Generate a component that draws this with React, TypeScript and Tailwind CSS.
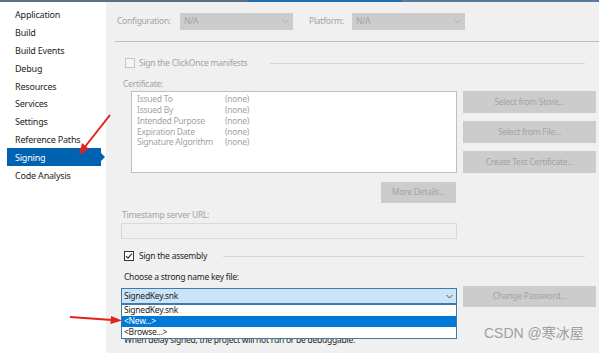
import React from "react";

const items = [
  "Application",
  "Build",
  "Build Events",
  "Debug",
  "Resources",
  "Services",
  "Settings",
  "Reference Paths",
  "Signing",
  "Code Analysis",
];

function Chevron({ color = "#9a9a9a" }: { color?: string }) {
  return (
    <svg width="7" height="5" viewBox="0 0 7 5">
      <path d="M0.5 1 L3.5 4 L6.5 1" fill="none" stroke={color} strokeWidth="1" />
    </svg>
  );
}

function DisabledButton({ label, w, h }: { label: string; w: string; h: string }) {
  return (
    <div className={`${w} ${h} bg-[#cccccc] flex items-center justify-center text-[#a3a3a3] whitespace-nowrap`}>{label}</div>
  );
}

export default function App() {
  return (
    <div
      className="relative w-[599px] h-[353px] overflow-hidden bg-[#f0f0f0] text-[8.5px] tracking-[-0.25px] leading-none text-[#1e1e1e] whitespace-nowrap"
      style={{ fontFamily: '"Noto Sans", "Open Sans", sans-serif' }}
    >
      {/* top strip */}
      <div className="flex h-[2px]">
        <div className="w-[248px] bg-[#5d6f83]" />
        <div className="w-[154px] bg-[#1f6fb2]" />
        <div className="flex-1 bg-[#5b7a99]" />
      </div>
      <div className="flex h-[351px]">
        {/* sidebar */}
        <div className="w-[106px] bg-white pt-[4px] flex flex-col text-[9px] tracking-[-0.2px]">
          {items.map((it) =>
            it === "Signing" ? (
              <div key={it} className="h-[17.8px] flex items-center">
                <div className="ml-[7px] w-[94px] h-[18px] bg-[#0063b1] text-white flex items-center pl-[8px]">
                  {it}
                </div>
                <div className="w-0 h-0 border-y-[4px] border-y-transparent border-l-[4px] border-l-[#0063b1]" />
              </div>
            ) : (
              <div key={it} className="h-[17.8px] flex items-center pl-[15px]">
                {it}
              </div>
            )
          )}
        </div>
        {/* content */}
        <div className="flex-1 flex flex-col">
          {/* config row */}
          <div className="mt-[11px] h-[17px] flex items-center pl-[11px] text-[#a3a3a3]">
            <div className="w-[63px]">Configuration:</div>
            <div className="w-[113px] h-[17px] bg-[#cccccc] flex items-center justify-between pl-[4px] pr-[4px]">
              <span>N/A</span>
              <Chevron color="#b0b0b0" />
            </div>
            <div className="ml-[16px] w-[43px]">Platform:</div>
            <div className="w-[113px] h-[17px] bg-[#cccccc] flex items-center justify-between pl-[4px] pr-[4px]">
              <span>N/A</span>
              <Chevron color="#b0b0b0" />
            </div>
          </div>
          <div className="mt-[11px] ml-[9px] h-px bg-[#bdbdbd]" />
          {/* clickonce */}
          <div className="mt-[16px] h-[10px] flex items-center pl-[19px] pr-[14px] text-[#a3a3a3]">
            <div className="w-[10px] h-[10px] border border-[#c6c6c6] bg-[#f5f5f5] shrink-0" />
            <span className="ml-[4px] w-[131px]">Sign the ClickOnce manifests</span>
            <div className="flex-1 h-px bg-[#d7d7d7]" />
          </div>
          <div className="mt-[11px] pl-[17px] h-[10px] flex items-center text-[#a3a3a3]">Certificate:</div>
          <div className="mt-[2px] flex pl-[25px]">
            <div className="w-[326px] h-[82px] bg-white border border-[#bfbfbf] pt-[2px] pl-[5px] text-[#a3a3a3]">
              {[
                ["Issued To", "(none)"],
                ["Issued By", "(none)"],
                ["Intended Purpose", "(none)"],
                ["Expiration Date", "(none)"],
                ["Signature Algorithm", "(none)"],
              ].map(([a, b]) => (
                <div key={a} className="h-[10.8px] flex items-center">
                  <span className="w-[88px]">{a}</span>
                  <span>{b}</span>
                </div>
              ))}
            </div>
            <div className="ml-[6px] flex flex-col gap-[8px]">
              <DisabledButton label="Select from Store..." w="w-[133px]" h="h-[22px]" />
              <DisabledButton label="Select from File..." w="w-[133px]" h="h-[22px]" />
              <DisabledButton label="Create Test Certificate..." w="w-[133px]" h="h-[22px]" />
            </div>
          </div>
          <div className="mt-[9px] flex pl-[275px]">
            <DisabledButton label="More Details..." w="w-[75px]" h="h-[21px]" />
          </div>
          <div className="mt-[7px] pl-[16px] h-[10px] flex items-center text-[#a3a3a3]">Timestamp server URL:</div>
          <div className="mt-[3px] ml-[15px] w-[336px] h-[16px] border border-[#d9d9d9] bg-[#f0f0f0]" />
          {/* sign the assembly */}
          <div className="mt-[12px] h-[10px] flex items-center pl-[18px] pr-[14px]">
            <div className="w-[10px] h-[10px] border border-[#333333] bg-white flex items-center justify-center shrink-0">
              <svg width="8" height="8" viewBox="0 0 8 8">
                <path d="M1 4 L3 6.2 L7 1.5" fill="none" stroke="#222" strokeWidth="1.1" />
              </svg>
            </div>
            <span className="ml-[5px] w-[84px]">Sign the assembly</span>
            <div className="flex-1 h-px bg-[#d7d7d7]" />
          </div>
          <div className="mt-[11px] pl-[18px] h-[10px] flex items-center">Choose a strong name key file:</div>
          <div className="mt-[4px] flex items-start pl-[15px]">
            <div className="relative">
              <div className="mt-[2px] w-[336px] h-[16px] bg-[#cce4f7] border border-[#3d7bad] flex items-center justify-between pl-[2px] pr-[3px]">
                <span>SignedKey.snk</span>
                <Chevron color="#555" />
              </div>
              <div className="absolute left-0 top-[18px] w-[336px] h-[35px] bg-white border border-[#3d7bad] flex flex-col z-10">
                <div className="h-[11px] flex items-center pl-[2px]">SignedKey.snk</div>
                <div className="h-[11px] flex items-center pl-[2px] bg-[#0078d7] text-white">&lt;New...&gt;</div>
                <div className="h-[11px] flex items-center pl-[2px]">&lt;Browse...&gt;</div>
              </div>
            </div>
            <div className="ml-[6px]">
              <DisabledButton label="Change Password..." w="w-[133px]" h="h-[21px]" />
            </div>
          </div>
          <div className="mt-[28px] pl-[18px] h-[10px] flex items-center">
            When delay signed, the project will not run or be debuggable.
          </div>
        </div>
      </div>

      {/* watermark */}
      <div
        className="absolute left-[484px] top-[326px] text-[14px] tracking-normal leading-none text-[#a0a0a0]"
        style={{ fontFamily: '"Liberation Sans", "Noto Sans CJK SC", sans-serif' }}
      >
        CSDN @寒冰屋
      </div>

      {/* red arrows */}
      <svg className="absolute left-0 top-0 pointer-events-none" width="599" height="353">
        <line x1="110" y1="115" x2="84" y2="148" stroke="#e0211d" strokeWidth="2" />
        <polygon points="79,155 82,143 89,149" fill="#e0211d" />
        <line x1="70" y1="317" x2="112" y2="320" stroke="#e0211d" strokeWidth="2" />
        <polygon points="122,320.5 111,316 110.5,324" fill="#e0211d" />
      </svg>
    </div>
  );
}
